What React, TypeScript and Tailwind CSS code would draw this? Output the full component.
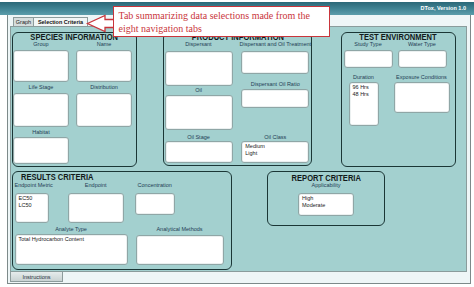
import React from 'react'

// DTox "Selection Criteria" tab with an annotation callout over the tab strip
const LBL = 'text-[5.5px] leading-[6px] h-[6px] my-[1px] text-[#1f3d55] whitespace-nowrap'
const BOX = 'bg-white border border-[#8fa6a6] rounded-[3px] shadow-[inset_0_0_0_0.5px_#d8e2e2]'
const SEC = 'border-[1.5px] border-[#1b3636] rounded-[6px] flex flex-col'

function Title({ children, className = '', left }: { children: React.ReactNode; className?: string; left?: boolean }) {
  return (
    <div className={`h-[8px] leading-[8px] whitespace-nowrap ${left ? '' : 'text-center'} ${className}`}>
      <span className={`inline-block text-[9px] font-bold text-[#121a1a] scale-x-[0.84] ${left ? 'origin-left' : 'origin-center'}`}>{children}</span>
    </div>
  )
}

function Field({ label, box, lines, className = '', left }: {
  label: string; box: string; lines?: string[]; className?: string; left?: boolean
}) {
  return (
    <div className={`flex flex-col ${left ? 'items-start' : 'items-center'} ${className}`}>
      <div className={LBL}>{label}</div>
      <div className={`${BOX} ${box} pl-[3px] pt-[1.5px] text-[5.5px] leading-[6.5px] text-[#1a1a1a]`}>
        {lines?.map(l => <div key={l}>{l}</div>)}
      </div>
    </div>
  )
}

export default function App() {
  return (
    <div className="relative w-[474px] h-[287px] overflow-hidden bg-white font-['Liberation_Sans',Arial,sans-serif]">
      {/* title bar */}
      <div className="mt-[2px] h-[13px] bg-linear-to-b from-[#2b6878] via-[#3f8292] to-[#5b9dab] flex items-center justify-end pr-[8px]">
        <span className="text-[5.5px] font-bold text-white">DTox, Version 1.0</span>
      </div>

      {/* window frame */}
      <div className="ml-[7px] w-[464px] h-[269px] border-x border-b border-[#7d8a8a] bg-[#eef6f7] flex flex-col">
        <div className="h-[2px]" />
        {/* tabs */}
        <div className="h-[9px] flex pl-[5px]">
          <div className="w-[21px] h-[9px] bg-[#d5dddd] border border-b-0 border-[#8d9c9c] text-[5.5px] leading-[8px] text-center text-[#222]">Graph</div>
          <div className="w-[54px] h-[9px] bg-[#f2f6f6] border border-l-0 border-b-0 border-[#8d9c9c] text-[5.5px] leading-[8px] text-center font-bold text-[#111]">Selection Criteria</div>
        </div>

        {/* main teal panel */}
        <div className="ml-[2px] w-[457px] h-[246px] bg-[#a3d0cf] border border-[#8a9c9c] pl-[1px] pt-[5px] flex flex-col">
          <div className="flex items-start">
            {/* species */}
            <section className={`${SEC} w-[125px] h-[135px]`}>
              <Title className="-mt-[2px] mb-[0.5px]">SPECIES INFORMATION</Title>
              <div className="flex gap-[7px]">
                <Field label="Group" box="w-[56px] h-[32px] mt-[2px]" />
                <Field label="Name" box="w-[56px] h-[32px] mt-[2px]" />
              </div>
              <div className="flex gap-[7px] mt-[1px]">
                <Field label="Life Stage" box="w-[56px] h-[34px] mt-[2px]" />
                <Field label="Distribution" box="w-[56px] h-[34px] mt-[2px]" />
              </div>
              <div className="flex mt-[1px]">
                <Field label="Habitat" box="w-[56px] h-[27px] mt-[1px]" />
              </div>
            </section>

            {/* product */}
            <section className={`${SEC} ml-[26px] w-[149px] h-[134px]`}>
              <Title className="-mt-[2px] mb-[0.5px]">PRODUCT INFORMATION</Title>
              <div className="flex gap-[7px] pl-[0.5px]">
                <div className="flex flex-col">
                  <Field label="Dispersant" box="w-[68px] h-[35px] mt-[3px]" />
                  <Field label="Oil" box="w-[68px] h-[35px] mt-[1px]" />
                  <Field label="Oil Stage" className="mt-[3px]" box="w-[68px] h-[22px]" />
                </div>
                <div className="flex flex-col">
                  <Field label="Dispersant and Oil Treatment" box="w-[68px] h-[23px] mt-[3px]" />
                  <Field label="Dispersant Oil Ratio" className="mt-[6px]" box="w-[68px] h-[19px] mt-[1px]" />
                  <Field label="Oil Class" className="mt-[25px]" box="w-[68px] h-[22px]" lines={['Medium', 'Light']} />
                </div>
              </div>
            </section>

            {/* test environment */}
            <section className={`${SEC} ml-[29px] w-[115px] h-[135px]`}>
              <Title className="-mt-[2px] mb-[0.5px]">TEST ENVIRONMENT</Title>
              <div className="flex gap-[5px] pl-[1.5px]">
                <Field label="Study Type" box="w-[49px] h-[18px] mt-[2px]" />
                <Field label="Water Type" box="w-[49px] h-[18px] mt-[2px]" />
              </div>
              <div className="flex items-start gap-[15px] pl-[6.5px] mt-[5px]">
                <Field label="Duration" box="w-[30px] h-[44px] mt-[1px]" lines={['96 Hrs', '48 Hrs']} />
                <Field label="Exposure Conditions" box="w-[56px] h-[31px] mt-[1px]" />
              </div>
            </section>
          </div>

          <div className="flex items-start mt-[4px]">
            {/* results */}
            <section className={`${SEC} w-[220px] h-[99px]`}>
              <Title left className="pl-[8px] -mt-[1px] mb-[0.5px]">RESULTS CRITERIA</Title>
              <div className="flex items-start pl-[1.5px] mt-[1px]">
                <Field left label="Endpoint Metric" box="w-[34px] h-[30px] mt-[4px]" lines={['EC50', 'LC50']} />
                <Field label="Endpoint" className="ml-[15px]" box="w-[56px] h-[30px] mt-[4px]" />
                <Field label="Concentration" className="ml-[11px]" box="w-[40px] h-[22px] mt-[4px]" />
              </div>
              <div className="flex items-start gap-[8px] pl-[1.5px] mt-[2px]">
                <Field label="Analyte Type" box="w-[113px] h-[31px] mt-[1px]" lines={['Total Hydrocarbon Content']} />
                <Field label="Analytical Methods" box="w-[88px] h-[30px] mt-[2px]" />
              </div>
            </section>

            {/* report */}
            <section className={`${SEC} ml-[35px] w-[118px] h-[55px] items-center`}>
              <Title className="mb-[0.5px] self-stretch">REPORT CRITERIA</Title>
              <Field label="Applicability" box="w-[56px] h-[23px] mt-[4px]" lines={['High', 'Moderate']} />
            </section>
          </div>
        </div>

        {/* bottom tab */}
        <div className="h-[11px] pl-[2px]">
          <div className="w-[53px] h-[10px] bg-linear-to-b from-[#e6ecec] to-[#c9d3d3] border border-t-0 border-[#8d9c9c] text-[5.5px] leading-[10px] text-center text-[#1f2f3a]">Instructions</div>
        </div>
      </div>

      {/* annotation callout */}
      <svg className="absolute left-[85px] top-[12px]" width="32" height="24" viewBox="85 12 32 24">
        <path d="M87.5 23.5 L105 15.5 L105 19.5 L115 19.5 L115 27.5 L105 27.5 L105 31.5 Z" fill="white" stroke="#c9353b" strokeWidth="1.3" strokeLinejoin="miter" />
      </svg>
      <div className="absolute left-[113px] top-[6px] w-[217px] h-[31px] bg-white border-[1.5px] border-[#c9353b] pl-[4.5px] pt-[2px] font-['Liberation_Serif','Times_New_Roman',serif] text-[10px] leading-[13px] text-[#c9353b]">
        <div>Tab summarizing data selections made from the</div>
        <div>eight navigation tabs</div>
      </div>
    </div>
  )
}
